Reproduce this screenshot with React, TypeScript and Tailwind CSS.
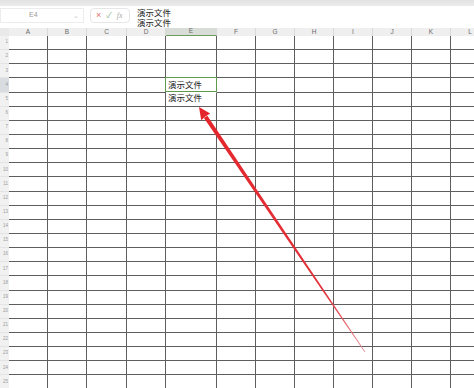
import React from "react";

const cols = [
  { k: "A", w: 39 },
  { k: "B", w: 39 },
  { k: "C", w: 40 },
  { k: "D", w: 39 },
  { k: "E", w: 51 },
  { k: "F", w: 39 },
  { k: "G", w: 39 },
  { k: "H", w: 39 },
  { k: "I", w: 39 },
  { k: "J", w: 39 },
  { k: "K", w: 39 },
  { k: "L", w: 39 },
];

const rows = Array.from({ length: 25 }, (_, i) => i + 1);

function Arrow() {
  return (
    <svg className="pointer-events-none absolute left-0 top-0" width="474" height="388" viewBox="0 0 474 388">
      <defs>
        <linearGradient id="shaft" x1="205" y1="117" x2="365" y2="352" gradientUnits="userSpaceOnUse">
          <stop offset="0" stopColor="#e4262c" />
          <stop offset="0.75" stopColor="#e2323a" />
          <stop offset="1" stopColor="#e98a92" />
        </linearGradient>
      </defs>
      <polygon points="207.4,115.7 203.9,118.1 364.7,352.3 365.3,351.8" fill="url(#shaft)" />
      <polygon points="199,107 210.2,113.6 205.7,116.2 201.2,120.2" fill="#e4262c" />
    </svg>
  );
}

export default function App() {
  return (
    <div
      className="relative h-[388px] w-[474px] overflow-hidden bg-white"
      style={{ fontFamily: '"Liberation Sans", "Noto Sans CJK SC", sans-serif' }}
    >
      {/* top strip */}
      <div className="h-[6px] bg-gradient-to-b from-[#e2e2e2] to-[#ececec]" />

      {/* formula bar */}
      <div className="flex h-[22px] items-start">
        <div className="mt-[2px] flex h-[15px] w-[84px] items-center border border-[#ececec] bg-white">
          <span className="ml-[28px] text-[7px] text-[#9a9a9a]">E4</span>
          <span className="ml-auto mr-[4px] text-[7px] leading-none text-[#c8c8c8]">⌄</span>
        </div>
        <div className="ml-[6px] mt-[2px] flex h-[15px] w-[40px] items-center gap-[5px] rounded-sm border border-[#e6e6e6] pl-[5px]">
          <span className="text-[9px] leading-none text-[#e07070]">×</span>
          <span className="text-[8px] leading-none text-[#86b58a]">✓</span>
          <span className="text-[8px] italic leading-none text-[#aaaaaa]" style={{ fontFamily: '"Liberation Serif", serif' }}>
            fx
          </span>
        </div>
        <div className="ml-[7px] flex flex-col pt-[2px] text-[8.5px] leading-[10px] text-[#222]">
          <span>演示文件</span>
          <span>演示文件</span>
        </div>
      </div>

      {/* column headers */}
      <div className="flex h-[8px] bg-[#efefef]">
        <div className="w-[9px] shrink-0 bg-[#e9e9e9]" />
        {cols.map((c) => (
          <div
            key={c.k}
            className={`flex shrink-0 items-center justify-center border-r border-[#dadada] text-[6.5px] leading-none text-[#6a6a6a] ${
              c.k === "E" ? "border-b border-b-[#6c9c5c] bg-[#d9ddd8]" : ""
            }`}
            style={{ width: c.w }}
          >
            {c.k}
          </div>
        ))}
      </div>

      {/* grid */}
      <div className="flex flex-col">
        {rows.map((r) => (
          <div key={r} className="flex h-[14.15px]">
            <div
              className={`flex w-[9px] shrink-0 items-center justify-end border-b border-[#e4e4e4] pr-[1px] text-[4.5px] leading-none text-[#9a9a9a] ${
                r === 4 ? "bg-[#d9dce0]" : "bg-[#f1f1f1]"
              }`}
            >
              {r}
            </div>
            {cols.map((c) => (
              <div
                key={c.k}
                className={`relative shrink-0 border-b border-r border-[#5e5e5e] ${
                  c.k === "E" && r === 4 ? "border-b-transparent" : ""
                }`}
                style={{ width: c.w }}
              >
                {c.k === "E" && r === 4 && (
                  <>
                    <div className="absolute left-[1px] top-[1px] z-10 flex w-[48px] flex-col bg-white pl-[1px] text-[8.5px] leading-[13px] text-[#1a1a1a]">
                      <span>演示文件</span>
                      <span>演示文件</span>
                    </div>
                    <div className="absolute -left-px -top-px z-20 h-[15px] w-[52px] border border-[#5f9a4c]" />
                  </>
                )}
              </div>
            ))}
          </div>
        ))}
      </div>

      <Arrow />
    </div>
  );
}
